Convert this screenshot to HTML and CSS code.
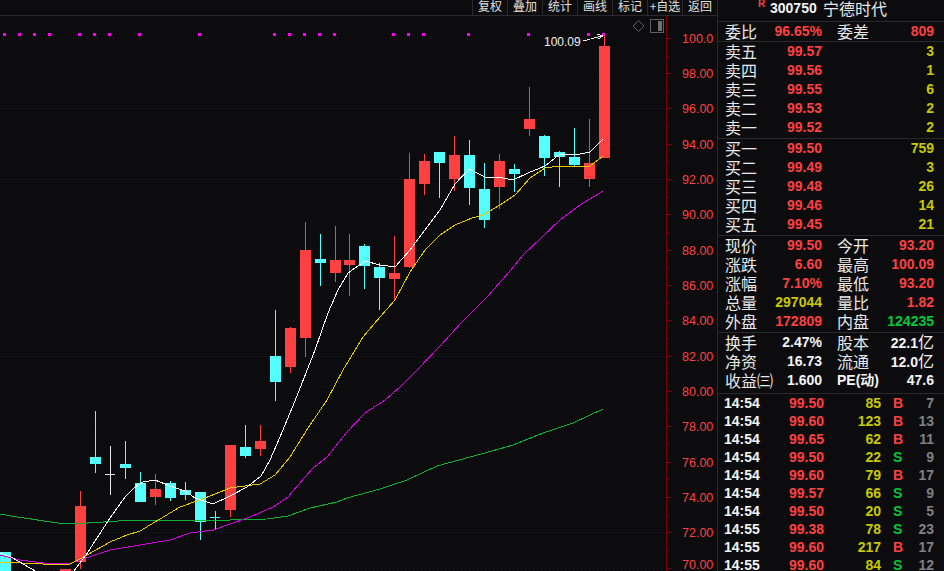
FILE: index.html
```html
<!DOCTYPE html>
<html lang="zh-CN">
<head>
<meta charset="utf-8">
<title>300750 宁德时代</title>
<link rel="stylesheet" href="styles.css">
</head>
<body>
<div class="app">
  <main class="main">
    <nav class="toolbar">
      <span class="tool">复权</span><span class="tool">叠加</span><span class="tool">统计</span><span class="tool">画线</span><span class="tool">标记</span><span class="tool">+自选</span><span class="tool">返回</span>
    </nav>
    <svg class="chart" viewBox="0 16 717 555" width="717" height="555" xmlns="http://www.w3.org/2000/svg">
      <path class="grid" d="M1 38.5H665M1 73.5H665M1 108.5H665M1 144.5H665M1 179.5H665M1 214.5H665M1 250.5H665M1 285.5H665M1 320.5H665M1 356.5H665M1 391.5H665M1 426.5H665M1 462.5H665M1 497.5H665M1 532.5H665M1 568.5H665"/>
      <path class="axis" d="M666.5 16V571M666 38.5H672M666 56.5H669M666 73.5H672M666 91.5H669M666 108.5H672M666 126.5H669M666 144.5H672M666 161.5H669M666 179.5H672M666 197.5H669M666 214.5H672M666 232.5H669M666 250.5H672M666 267.5H669M666 285.5H672M666 303.5H669M666 320.5H672M666 338.5H669M666 356.5H672M666 373.5H669M666 391.5H672M666 409.5H669M666 426.5H672M666 444.5H669M666 462.5H672M666 479.5H669M666 497.5H672M666 515.5H669M666 532.5H672M666 550.5H669M666 568.5H672"/>
      <g class="scale">
        <text x="682" y="39">100.0</text><text x="682" y="74">98.00</text><text x="682" y="109">96.00</text><text x="682" y="145">94.00</text>
        <text x="682" y="180">92.00</text><text x="682" y="215">90.00</text><text x="682" y="251">88.00</text><text x="682" y="286">86.00</text>
        <text x="682" y="321">84.00</text><text x="682" y="357">82.00</text><text x="682" y="392">80.00</text><text x="682" y="427">78.00</text>
        <text x="682" y="463">76.00</text><text x="682" y="498">74.00</text><text x="682" y="533">72.00</text><text x="682" y="565">70.00</text>
      </g>
      <path class="marks" d="M3 33h3v3h-3zM18 33h3v3h-3zM33 33h3v3h-3zM48 33h3v3h-3zM78 33h3v3h-3zM93 33h3v3h-3zM108 33h3v3h-3zM138 33h3v3h-3zM198 33h3v3h-3zM273 33h3v3h-3zM288 33h3v3h-3zM303 33h3v3h-3zM318 33h3v3h-3zM333 33h3v3h-3zM392 33h3v3h-3zM407 33h3v3h-3zM422 33h3v3h-3zM467 33h3v3h-3zM527 33h3v3h-3zM587 33h3v3h-3zM602 33h3v3h-3z"/>
      <path class="up" d="M60 569h11v3h-11zM75 506h11v56h-11zM80 491h1v78h-1zM150 489h11v8h-11zM155 474h1v31h-1zM225 445h11v65h-11zM230 445h1v72h-1zM255 441h11v8h-11zM260 425h1v31h-1zM285 328h11v39h-11zM290 327h1v46h-1zM300 250h11v88h-11zM305 222h1v135h-1zM330 260h11v13h-11zM335 226h1v56h-1zM344 260h11v5h-11zM349 234h1v62h-1zM389 273h11v6h-11zM394 236h1v64h-1zM404 179h11v88h-11zM409 153h1v115h-1zM419 161h11v23h-11zM424 154h1v41h-1zM449 155h11v24h-11zM454 136h1v55h-1zM494 161h11v26h-11zM499 154h1v55h-1zM524 119h11v10h-11zM529 87h1v49h-1zM584 163h11v16h-11zM589 119h1v68h-1zM599 46h11v112h-11zM604 35h1v11h-1z"/>
      <path class="down" d="M0 552h11v20h-11zM90 457h11v7h-11zM95 411h1v62h-1zM120 464h11v4h-11zM125 441h1v38h-1zM135 483h11v19h-11zM140 472h1v30h-1zM165 483h11v15h-11zM170 481h1v20h-1zM180 490h11v5h-11zM185 482h1v18h-1zM195 492h11v30h-11zM200 492h1v48h-1zM210 517h10v1h-10zM215 511h1v18h-1zM240 447h11v9h-11zM245 425h1v33h-1zM270 356h11v26h-11zM275 310h1v91h-1zM315 259h11v4h-11zM320 234h1v52h-1zM359 246h11v20h-11zM364 244h1v45h-1zM374 267h11v11h-11zM379 263h1v47h-1zM434 152h11v11h-11zM439 152h1v46h-1zM464 155h11v33h-11zM469 140h1v65h-1zM479 189h11v31h-11zM484 163h1v65h-1zM509 169h11v5h-11zM514 164h1v28h-1zM539 136h11v22h-11zM544 135h1v41h-1zM554 152h11v5h-11zM559 151h1v36h-1zM569 157h11v8h-11zM574 128h1v38h-1z"/>
      <path class="flat" d="M105 474h10v1h-10zM110 446h1v49h-1z"/>
      <polyline class="ma ma60" points="0,514 17,517 58,523 87,523 103,522 133,520 230,520 267,519 288,516 310,508 337,502 347,498 380,489 407,480 437,466 470,457 492,451 513,445 543,433 573,423 603,409"/>
      <polyline class="ma ma20" points="0,555 20,560 43,563 68,564 80,560 110,550 140,545 170,540 190,533 213,530 230,524 250,517 273,507 288,497 298,485 313,468 327,457 347,432 365,413 385,400 400,387 417,370 440,346 462,322 477,307 487,297 502,280 510,271 523,255 560,220 580,205 603,191"/>
      <polyline class="ma ma10" points="0,562 43,564 68,565 80,559 110,542 127,535 140,531 155,522 180,507 200,500 230,488 260,484 275,475 290,457 308,428 327,400 343,370 363,337 380,317 395,300 410,272 425,250 440,235 455,225 472,218 483,215 500,205 515,195 530,178 545,168 560,166 590,166 603,156"/>
      <polyline class="ma ma5" points="0,553 11,557 37,572 60,590 74,571 86,555 110,518 125,497 135,487 143,482 155,480 170,486 185,491 195,498 213,504 230,496 247,487 261,476 270,460 280,437 295,401 315,350 328,313 338,290 348,273 365,261 380,265 395,267 410,250 440,210 455,184 469,169 485,177 503,178 513,180 528,173 545,166 560,154 575,155 590,152 603,139"/>
      <text class="peak" x="544" y="42">100.09</text>
      <path class="arrow" d="M583 41L602 36"/>
      <path class="arrow-head" d="M597 34L603 36L598 39"/>
      <polygon class="icon-line" points="638.5,20.5 644,26 638.5,31.5 633,26"/>
      <rect class="icon-line" x="650.5" y="19.5" width="13" height="13"/>
      <rect class="icon-fill" x="658" y="21" width="4" height="10"/>
    </svg>
  </main>
  <aside class="panel">
    <header class="title"><span class="flag">R</span><span class="code">300750</span><span class="name">宁德时代</span></header>
    <section class="block">
      <div class="row"><div class="pair"><span class="label">委比</span><b class="red">96.65%</b></div><div class="pair"><span class="label">委差</span><b class="red">809</b></div></div>
    </section>
    <section class="block tail">
      <div class="row"><div class="pair"><span class="label">卖五</span><b class="red">99.57</b></div><div class="pair end"><b class="yellow">3</b></div></div>
      <div class="row"><div class="pair"><span class="label">卖四</span><b class="red">99.56</b></div><div class="pair end"><b class="yellow">1</b></div></div>
      <div class="row"><div class="pair"><span class="label">卖三</span><b class="red">99.55</b></div><div class="pair end"><b class="yellow">6</b></div></div>
      <div class="row"><div class="pair"><span class="label">卖二</span><b class="red">99.53</b></div><div class="pair end"><b class="yellow">2</b></div></div>
      <div class="row"><div class="pair"><span class="label">卖一</span><b class="red">99.52</b></div><div class="pair end"><b class="yellow">2</b></div></div>
    </section>
    <section class="block tail">
      <div class="row"><div class="pair"><span class="label">买一</span><b class="red">99.50</b></div><div class="pair end"><b class="yellow">759</b></div></div>
      <div class="row"><div class="pair"><span class="label">买二</span><b class="red">99.49</b></div><div class="pair end"><b class="yellow">3</b></div></div>
      <div class="row"><div class="pair"><span class="label">买三</span><b class="red">99.48</b></div><div class="pair end"><b class="yellow">26</b></div></div>
      <div class="row"><div class="pair"><span class="label">买四</span><b class="red">99.46</b></div><div class="pair end"><b class="yellow">14</b></div></div>
      <div class="row"><div class="pair"><span class="label">买五</span><b class="red">99.45</b></div><div class="pair end"><b class="yellow">21</b></div></div>
    </section>
    <section class="block tail">
      <div class="row"><div class="pair"><span class="label">现价</span><b class="red">99.50</b></div><div class="pair"><span class="label">今开</span><b class="red">93.20</b></div></div>
      <div class="row"><div class="pair"><span class="label">涨跌</span><b class="red">6.60</b></div><div class="pair"><span class="label">最高</span><b class="red">100.09</b></div></div>
      <div class="row"><div class="pair"><span class="label">涨幅</span><b class="red">7.10%</b></div><div class="pair"><span class="label">最低</span><b class="red">93.20</b></div></div>
      <div class="row"><div class="pair"><span class="label">总量</span><b class="yellow">297044</b></div><div class="pair"><span class="label">量比</span><b class="red">1.82</b></div></div>
      <div class="row"><div class="pair"><span class="label">外盘</span><b class="red">172809</b></div><div class="pair"><span class="label">内盘</span><b class="green">124235</b></div></div>
    </section>
    <section class="block stats">
      <div class="row"><div class="pair"><span class="label">换手</span><b class="white">2.47%</b></div><div class="pair"><span class="label">股本</span><b class="white">22.1<span class="unit">亿</span></b></div></div>
      <div class="row"><div class="pair"><span class="label">净资</span><b class="white">16.73</b></div><div class="pair"><span class="label">流通</span><b class="white">12.0<span class="unit">亿</span></b></div></div>
      <div class="row"><div class="pair"><span class="label">收益㈢</span><b class="white">1.600</b></div><div class="pair"><b class="white">PE(动)</b><b class="white">47.6</b></div></div>
    </section>
    <section class="trades">
      <div class="trade"><b class="white">14:54</b><b class="red num">99.50</b><b class="yellow num">85</b><b class="red side">B</b><b class="gray num">7</b></div>
      <div class="trade"><b class="white">14:54</b><b class="red num">99.60</b><b class="yellow num">123</b><b class="red side">B</b><b class="gray num">13</b></div>
      <div class="trade"><b class="white">14:54</b><b class="red num">99.65</b><b class="yellow num">62</b><b class="red side">B</b><b class="gray num">11</b></div>
      <div class="trade"><b class="white">14:54</b><b class="red num">99.50</b><b class="yellow num">22</b><b class="green side">S</b><b class="gray num">9</b></div>
      <div class="trade"><b class="white">14:54</b><b class="red num">99.60</b><b class="yellow num">79</b><b class="red side">B</b><b class="gray num">17</b></div>
      <div class="trade"><b class="white">14:54</b><b class="red num">99.57</b><b class="yellow num">66</b><b class="green side">S</b><b class="gray num">9</b></div>
      <div class="trade"><b class="white">14:54</b><b class="red num">99.50</b><b class="yellow num">20</b><b class="green side">S</b><b class="gray num">5</b></div>
      <div class="trade"><b class="white">14:55</b><b class="red num">99.38</b><b class="yellow num">78</b><b class="green side">S</b><b class="gray num">23</b></div>
      <div class="trade"><b class="white">14:55</b><b class="red num">99.60</b><b class="yellow num">217</b><b class="red side">B</b><b class="gray num">17</b></div>
      <div class="trade"><b class="white">14:55</b><b class="red num">99.60</b><b class="yellow num">84</b><b class="green side">S</b><b class="gray num">12</b></div>
    </section>
  </aside>
</div>
</body>
</html>
```
FILE: styles.css
```css
* { box-sizing: border-box; }
html, body { margin: 0; height: 100%; overflow: hidden; background: #0c0c0f; }
body { font-family: "Liberation Sans", "Noto Sans CJK SC", sans-serif; color: #f0f0f0; }
.app { display: flex; width: 944px; height: 571px; overflow: hidden; }

.main { width: 717px; flex: none; display: flex; flex-direction: column; }
.toolbar { display: flex; justify-content: flex-end; height: 16px; border-bottom: 1px solid #2a2a2c; }
.tool { width: 35px; border-left: 1px solid #2a2a2c; font: 12px/12px "Noto Sans CJK SC", sans-serif; color: #e0e0e0; text-align: center; white-space: nowrap; }
.chart { display: block; }

.grid { fill: none; stroke: #4c0808; stroke-width: 1; stroke-dasharray: 1 3; shape-rendering: crispEdges; }
.axis { fill: none; stroke: #780000; stroke-width: 1; shape-rendering: crispEdges; }
.scale text { font: 12.5px "Liberation Sans", sans-serif; fill: #ff4040; dominant-baseline: central; }
.marks { fill: #ff00ff; shape-rendering: crispEdges; }
.up { fill: #ff4040; shape-rendering: crispEdges; }
.down { fill: #54ffff; shape-rendering: crispEdges; }
.flat { fill: #e8e8e8; shape-rendering: crispEdges; }
.ma { fill: none; stroke-width: 1; shape-rendering: crispEdges; }
.ma5 { stroke: #ffffff; }
.ma10 { stroke: #e8c800; }
.ma20 { stroke: #d000e0; }
.ma60 { stroke: #10b030; }
.peak { font: 12px "Liberation Sans", sans-serif; fill: #f0f0f0; dominant-baseline: central; }
.arrow { fill: none; stroke: #f0f0f0; stroke-width: 1; stroke-dasharray: 7 1; shape-rendering: crispEdges; }
.arrow-head { fill: none; stroke: #f0f0f0; stroke-width: 1; shape-rendering: crispEdges; }
.icon-line { fill: none; stroke: #606060; stroke-width: 1; }
.icon-fill { fill: #707070; }

.panel { width: 227px; flex: none; border-left: 1px solid #2a2a2c; overflow: hidden; }
.title { height: 22px; border-bottom: 1px solid #2a2a2c; display: flex; align-items: flex-start; padding-left: 40px; }
.flag { font: bold 10px/8px "Liberation Sans", sans-serif; color: #ff4040; width: 12px; }
.code { font: bold 14px/16px "Liberation Sans", sans-serif; color: #f4f4f4; width: 53px; }
.name { font: 16px/16px "Noto Sans CJK SC", sans-serif; color: #e8e8e8; }

.block { border-bottom: 1px solid #2a2a2c; padding: 0 10px 0 7px; }
.tail { padding-bottom: 1px; }
.stats { padding-bottom: 3px; }
.row { display: flex; gap: 15px; height: 19px; align-items: center; }
.pair { width: 97px; display: flex; justify-content: space-between; align-items: center; }
.end { justify-content: flex-end; }
.label { font: 16px/19px "Noto Sans CJK SC", sans-serif; color: #e8e8e8; white-space: nowrap; }
.pair b { font-size: 14px; line-height: 19px; white-space: nowrap; }
.unit { font: 16px/19px "Noto Sans CJK SC", sans-serif; }

.trades { padding: 0 10px 0 6px; }
.trade { display: grid; grid-template-columns: 40px 60px 57px 23px 30px; height: 18px; align-items: center; }
.trade b { font-size: 14px; line-height: 18px; }
.num { text-align: right; }
.side { padding-left: 12px; }

.red { color: #ff4040; }
.yellow { color: #c8c800; }
.green { color: #00c83c; }
.white { color: #f4f4f4; }
.gray { color: #808080; }
```
